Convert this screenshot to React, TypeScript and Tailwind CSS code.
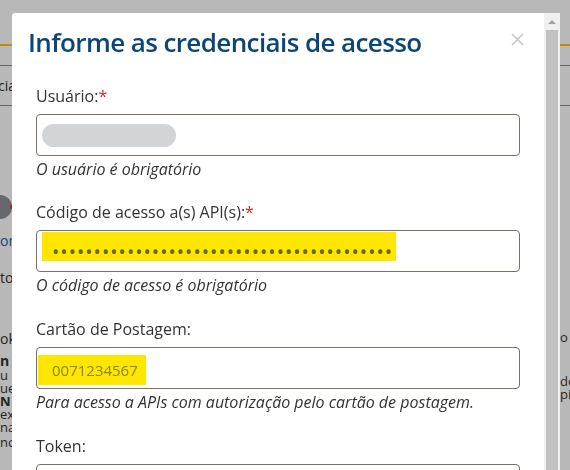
import type { ReactNode } from 'react';

// page behind the dialog, mostly covered by it
function BackgroundPage() {
  return (
    <div className="min-h-screen bg-white font-['Open_Sans',sans-serif] text-[14px] text-[#333] overflow-hidden">
      <div className="h-[44px]" />
      <div className="h-[2px] bg-[#ffc800]" />
      <div className="h-[19px]" />
      <div className="h-[41px] border-y border-[#8c8c8c] flex items-center">
        <span className="ml-[-2px] text-[14px]">ciais de acesso</span>
      </div>
      <div className="grid grid-cols-[560px_1fr]">
        <div className="flex flex-col">
          <div className="mt-[89px] ml-[-12px] w-[24px] h-[24px] rounded-full bg-[#8f9096] flex items-center justify-center">
            <div className="w-[4px] h-[4px] rounded-full bg-[#d04040] ml-[22px]" />
          </div>
          <span className="mt-[12px] leading-[20px] text-[#1e5fa8]">omo obter</span>
          <span className="mt-[17px] leading-[20px]">token de acesso</span>
          <span className="mt-[41px] leading-[20px]">oken</span>
          <span className="mt-[4px] leading-[16px] font-bold">n</span>
          <span className="leading-[13px] text-[13px]">u usuário</span>
          <span className="leading-[13px] text-[13px]">ue deve</span>
          <span className="leading-[13px] text-[13px] font-bold">N</span>
          <span className="leading-[13px] text-[13px]">exemplo</span>
          <span className="leading-[13px] text-[13px]">na conta</span>
          <span className="leading-[16px] text-[13px]">nc</span>
        </div>
        <div className="flex flex-col text-[13px]">
          <span className="mt-[223px] leading-[16px]">o</span>
          <span className="mt-[30px] leading-[13px]">do</span>
          <span className="leading-[13px]">pi</span>
        </div>
      </div>
    </div>
  );
}

function Field({
  label,
  required,
  help,
  spaced,
  children,
}: {
  label: string;
  required?: boolean;
  help?: string;
  spaced?: boolean;
  children?: ReactNode;
}) {
  return (
    <div className={`flex flex-col ${spaced ? 'mb-[24px]' : 'mb-[23px]'}`}>
      <label className="leading-[20px] text-[16px] text-[#333]">
        {label}
        {required && <span className="text-[#e41e1e]">*</span>}
      </label>
      <div className="mt-[8px] h-[42px] border border-[#7b7066] rounded-[4px] flex items-center px-[5px]">
        {children}
      </div>
      {help && <p className="mt-[3px] leading-[20px] text-[16px] italic text-[#333]">{help}</p>}
    </div>
  );
}

export default function App() {
  const dots = '•'.repeat(41);

  return (
    <div className="relative min-h-screen">
      <BackgroundPage />
      <div className="fixed inset-0 bg-black/[0.28]" />

      {/* Modal */}
      <div className="fixed top-[13px] left-[12px] w-[548px] bottom-0 flex bg-white rounded-tl-[3px] overflow-hidden font-['Open_Sans',sans-serif]">
        <div className="flex-1 flex flex-col">
          <div className="flex justify-between items-start pt-[13px] pl-[16px] pr-[20px]">
            <h2 className="text-[26px] leading-[32px] font-semibold text-[#0b4677] tracking-[-0.6px]">
              Informe as credenciais de acesso
            </h2>
            <button className="mt-[7px] w-[13px] h-[13px]">
              <svg viewBox="0 0 13 13" className="w-[13px] h-[13px]">
                <path d="M1 1 L12 12 M12 1 L1 12" stroke="#c6c6c6" strokeWidth="1.6" />
              </svg>
            </button>
          </div>

          <div className="mt-[28px] px-[24px]">
            <Field label="Usuário:" required help="O usuário é obrigatório">
              <div className="w-[134px] h-[23px] rounded-full bg-[#d3d4d6]" />
            </Field>

            <Field label="Código de acesso a(s) API(s):" required spaced help="O código de acesso é obrigatório">
              <div className="self-start mt-[1px] h-[29px] w-[354px] bg-[#ffe600] pl-[10px] overflow-hidden">
                <span className="block text-[20px] leading-[29px] text-[#6a6800] tracking-[0.8px] translate-y-[5px]">
                  {dots}
                </span>
              </div>
            </Field>

            <Field
              label="Cartão de Postagem:"
              spaced
              help="Para acesso a APIs com autorização pelo cartão de postagem."
            >
              <div className="self-start mt-[7px] ml-[-4px] h-[30px] w-[108px] bg-[#ffe600] pl-[14px] flex items-center">
                <span className="text-[15px] text-[#8a8600]">0071234567</span>
              </div>
            </Field>

            <Field label="Token:" />
          </div>
        </div>

        {/* scrollbar */}
        <div className="w-[16px] bg-[#f0f0f0] flex flex-col items-center">
          <div className="h-[17px] flex items-center justify-center">
            <div className="w-0 h-0 border-x-[4px] border-x-transparent border-b-[4px] border-b-[#a3a3a3]" />
          </div>
          <div className="w-[12px] flex-1 bg-[#c1c1c1]" />
        </div>
      </div>
    </div>
  );
}
